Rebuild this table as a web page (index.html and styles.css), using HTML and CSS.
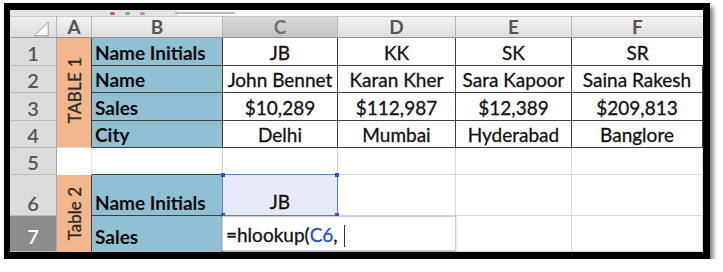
FILE: index.html
```html
<!DOCTYPE html>
<html>
<head>
<meta charset="utf-8">
<link rel="stylesheet" href="styles.css">
</head>
<body>
<div class="frame">
  <div class="strip">
    <span class="dot red"></span><span class="dot green"></span><span class="dot grey"></span>
    <span class="striptext"></span>
  </div>
  <div class="sheet">
    <div class="corner"><svg width="47" height="22" viewBox="0 0 47 22"><path d="M39 5 L39 19 L25 19 Z" fill="#fff" stroke="#9a9a9a" stroke-width="1"/></svg></div>
    <div class="ch">A</div>
    <div class="ch">B</div>
    <div class="ch sel">C</div>
    <div class="ch">D</div>
    <div class="ch">E</div>
    <div class="ch last">F</div>

    <div class="rh">1</div>
    <div class="tagcell t1"><span class="vt">TABLE 1</span></div>
    <div class="lbl">Name Initials</div>
    <div class="d">JB</div>
    <div class="d">KK</div>
    <div class="d">SK</div>
    <div class="d">SR</div>

    <div class="rh">2</div>
    <div class="lbl">Name</div>
    <div class="d">John Bennet</div>
    <div class="d">Karan Kher</div>
    <div class="d">Sara Kapoor</div>
    <div class="d">Saina Rakesh</div>

    <div class="rh">3</div>
    <div class="lbl">Sales</div>
    <div class="d">$10,289</div>
    <div class="d">$112,987</div>
    <div class="d">$12,389</div>
    <div class="d">$209,813</div>

    <div class="rh">4</div>
    <div class="lbl">City</div>
    <div class="d">Delhi</div>
    <div class="d">Mumbai</div>
    <div class="d">Hyderabad</div>
    <div class="d">Banglore</div>

    <div class="rh">5</div>
    <div class="e ea"></div>
    <div class="e eb"></div>
    <div class="e"></div>
    <div class="e"></div>
    <div class="e"></div>
    <div class="e"></div>

    <div class="rh">6</div>
    <div class="tagcell t2"><span class="vt">Table 2</span></div>
    <div class="lbl">Name Initials</div>
    <div class="e active">JB
      <span class="h tl"></span><span class="h tr"></span><span class="h bl"></span><span class="h br"></span>
    </div>
    <div class="e"></div>
    <div class="e"></div>
    <div class="e"></div>

    <div class="rh rsel">7</div>
    <div class="lbl r7">Sales</div>
    <div class="e editcell">
      <div class="editor">=hlookup(<span class="ref">C6</span>,<span class="caret"></span></div>
    </div>
    <div class="e"></div>
    <div class="e"></div>
    <div class="e"></div>
  </div>
</div>
</body>
</html>
```

FILE: styles.css
```css
html, body {
  margin: 0;
  padding: 0;
  background: #ffffff;
}
body {
  padding: 3px 0 0 4px;
  font-family: Lato, "Open Sans", sans-serif;
}
.frame {
  width: 693px;
  border-style: solid;
  border-color: #000;
  border-width: 7px 7px 7px 6px;
  box-shadow: 3px 4px 5px rgba(0,0,0,0.55);
  background: #fff;
}
.strip {
  height: 6px;
  background: linear-gradient(to right, #e4e4e4 0, #e4e4e4 168px, #f7f7f7 168px);
  display: flex;
  align-items: center;
  gap: 10px;
  padding-left: 100px;
  overflow: hidden;
}
.dot {
  width: 5px;
  height: 3px;
  border-radius: 2px;
}
.red { background: #d9534f; }
.green { background: #6cbf5a; }
.grey { background: #a0a0a0; }
.striptext {
  margin-left: 20px;
  width: 60px;
  height: 2px;
  background: #8d8fa8;
  opacity: .6;
}
.sheet {
  display: grid;
  grid-template-columns: 47px 35px 131px 115px 118px 116px 131px;
  grid-template-rows: 22px 28px 27px 28px 27px 27px 41px 36px;
  font-size: 19px;
  color: #111;
}
.sheet > div {
  box-sizing: border-box;
  display: flex;
  align-items: flex-end;
  justify-content: center;
  line-height: 22px;
  padding-bottom: 1px;
  white-space: nowrap;
}
.corner {
  background: linear-gradient(#efefef, #dcdcdc);
  border-right: 1px solid #b5b5b5;
  border-bottom: 1px solid #9c9c9c;
  border-top: 1px solid #c8c8c8;
  padding: 0 !important;
  align-items: stretch !important;
}
.corner svg { display: block; }
.ch {
  background: linear-gradient(#f3f3f3, #dedede);
  border-right: 1px solid #b5b5b5;
  border-bottom: 1px solid #8f8f8f;
  border-top: 1px solid #c8c8c8;
  font-weight: 700;
  font-size: 19px;
  color: #555;
  padding-bottom: 0 !important;
  line-height: 20px !important;
}
.ch.sel {
  background: linear-gradient(#dadada, #c3c3c3);
  color: #6e6e6e;
}
.ch.last { border-right: none; }
.rh {
  background: #dcdcdc;
  border-right: 1px solid #a9a9a9;
  border-bottom: 1px solid #bdbdbd;
  font-size: 20px;
  color: #555;
  font-weight: 600;
}
.rh.rsel {
  background: #8c8c8c;
  color: #fff;
  padding-bottom: 4px !important;
}
.tagcell {
  background: #f1b68b;
  border-right: 1px solid #3e3e3e;
  border-bottom: 1px solid #d9d9d9;
  align-items: center !important;
  padding: 0 !important;
}
.t1 { grid-row: span 4; }
.t2 { grid-row: span 2; border-bottom: none; }
.vt {
  writing-mode: vertical-rl;
  transform: rotate(180deg);
  font-size: 17px;
  color: #2a2a2a;
  line-height: 17px;
  -webkit-text-stroke: 0.3px #2a2a2a;
}
.t1 .vt { margin-top: -4px; letter-spacing: 0.3px; }
.lbl {
  background: #91c0d3;
  border-right: 1px solid #3e3e3e;
  border-bottom: 1px solid #3e3e3e;
  justify-content: flex-start !important;
  padding-left: 3px;
  font-weight: 700;
  color: #0a0a0a;
}
.d {
  border-right: 1px solid #3e3e3e;
  border-bottom: 1px solid #3e3e3e;
  -webkit-text-stroke: 0.3px #111;
}
.d:nth-child(7n) { border-right: none; }
.e {
  border-right: 1px solid #d6d6d6;
  border-bottom: 1px solid #d6d6d6;
}
.ea {
  background: #fff;
  border-right: 1px solid #e4e4e4;
  border-bottom: none;
}
.eb {
  border-bottom: 1px solid #3e3e3e !important;
  border-right: 1px solid #d6d6d6;
}
.r7 { padding-bottom: 4px !important; border-bottom: none; }
.active {
  position: relative;
  background: #e6eaf8;
  border: 1px solid #5a7fdc !important;
  margin-left: -1px;
  margin-top: -1px;
  padding-bottom: 2px !important;
  -webkit-text-stroke: 0.3px #111;
}
.h {
  position: absolute;
  width: 4px;
  height: 4px;
  background: #2b55d2;
}
.h.tl { left: -2px; top: -2px; }
.h.tr { right: -2px; top: -2px; }
.h.bl { left: -2px; bottom: -2px; }
.h.br { right: -2px; bottom: -2px; }
.editcell {
  position: relative;
}
.editor {
  position: absolute;
  left: -1px;
  top: 0;
  width: 234px;
  height: 35px;
  box-sizing: border-box;
  background: #fff;
  border: 1px solid #cfcfcf;
  box-shadow: 0 1px 2px rgba(0,0,0,0.25);
  display: flex;
  align-items: flex-end;
  padding: 0 0 4px 3px;
  font-size: 19px;
  line-height: 22px;
  color: #111;
  -webkit-text-stroke: 0.3px currentColor;
}
.ref { color: #1f4fd0; }
.caret {
  display: inline-block;
  width: 1px;
  height: 22px;
  background: #333;
  margin-left: 6px;
  align-self: flex-end;
  margin-bottom: -1px;
}
```
